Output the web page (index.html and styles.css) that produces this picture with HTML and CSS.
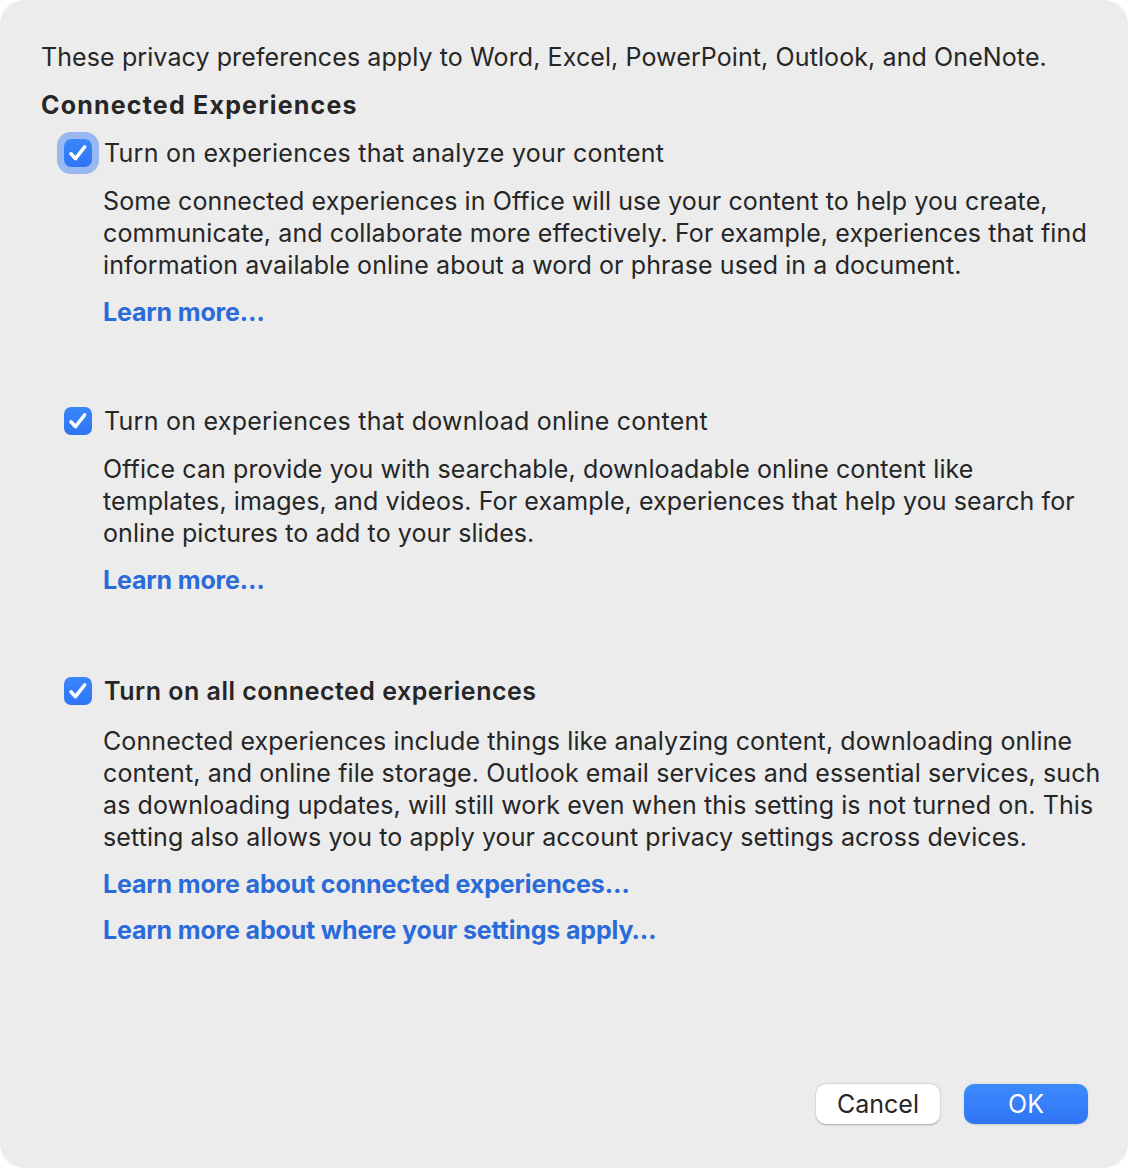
FILE: index.html
```html
<!DOCTYPE html>
<html lang="en">
  <head>
    <meta charset="utf-8" />
    <title>Privacy preferences</title>
    <link rel="stylesheet" href="styles.css">
  </head>
  <body>
    <div class="window">
      <p class="intro">These privacy preferences apply to Word, Excel, PowerPoint, Outlook, and OneNote.</p>
      <h2 class="heading">Connected Experiences</h2>

      <section class="option first">
        <label class="check-row">
          <span class="box focused">
            <svg viewBox="0 0 28 28" width="28" height="28"><path d="M7 14.8l4.4 4.8 9.2-11.6" fill="none" stroke="#fff" stroke-width="3.6" stroke-linecap="round" stroke-linejoin="round"/></svg>
          </span>
          <span class="label">Turn on experiences that analyze your content</span>
        </label>
        <p class="desc">Some connected experiences in Office will use your content to help you create, communicate, and collaborate more effectively. For example, experiences that find information available online about a word or phrase used in a document.</p>
        <a class="link" href="#">Learn more…</a>
      </section>

      <section class="option">
        <label class="check-row">
          <span class="box">
            <svg viewBox="0 0 28 28" width="28" height="28"><path d="M7 14.8l4.4 4.8 9.2-11.6" fill="none" stroke="#fff" stroke-width="3.6" stroke-linecap="round" stroke-linejoin="round"/></svg>
          </span>
          <span class="label">Turn on experiences that download online content</span>
        </label>
        <p class="desc">Office can provide you with searchable, downloadable online content like<br>templates, images, and videos. For example, experiences that help you search for online pictures to add to your slides.</p>
        <a class="link" href="#">Learn more…</a>
      </section>

      <section class="option last">
        <label class="check-row">
          <span class="box">
            <svg viewBox="0 0 28 28" width="28" height="28"><path d="M7 14.8l4.4 4.8 9.2-11.6" fill="none" stroke="#fff" stroke-width="3.6" stroke-linecap="round" stroke-linejoin="round"/></svg>
          </span>
          <span class="label strong">Turn on all connected experiences</span>
        </label>
        <p class="desc">Connected experiences include things like analyzing content, downloading online content, and online file storage. Outlook email services and essential services, such as downloading updates, will still work even when this setting is not turned on. This setting also allows you to apply your account privacy settings across devices.</p>
        <a class="link" href="#">Learn more about connected experiences…</a>
        <a class="link" href="#">Learn more about where your settings apply…</a>
      </section>

      <footer class="buttons">
        <button class="btn cancel">Cancel</button>
        <button class="btn ok">OK</button>
      </footer>
    </div>
  </body>
</html>
```

FILE: styles.css
```css
html,
body {
  margin: 0;
  background: #ffffff;
  font-family: Inter, "Noto Sans", sans-serif;
  color: #262626;
}

.window {
  box-sizing: border-box;
  height: 1168px;
  background: #ececec;
  border-radius: 24px;
  padding: 41px 20px 44px 41px;
  display: flex;
  flex-direction: column;
  font-size: 25px;
  line-height: 32px;
  letter-spacing: 0.1px;
}

.intro {
  margin: 0;
}

.heading {
  margin: 16px 0 0 0;
  font-size: 25px;
  font-weight: 700;
  line-height: 32px;
  letter-spacing: 1.2px;
}

.option {
  display: flex;
  flex-direction: column;
  align-items: flex-start;
  padding-left: 23px;
  margin-top: 77px;
}

.option.first {
  margin-top: 16px;
}

.option.last {
  margin-top: 79px;
}

.check-row {
  display: flex;
  align-items: center;
  gap: 12px;
}

.box {
  width: 28px;
  height: 28px;
  border-radius: 7px;
  background: linear-gradient(#3a86fb, #2f74f4);
  display: flex;
}

.box.focused {
  box-shadow: 0 0 0 7px rgba(70, 130, 245, 0.5);
}

.label {
  letter-spacing: 0.25px;
}

.label.strong {
  font-weight: 600;
  letter-spacing: 0.5px;
}

.desc {
  margin: 16px 0 0 39px;
  width: 1000px;
}

.last .desc {
  margin-top: 18px;
}

.link {
  margin-top: 15px;
  margin-left: 39px;
  color: #2b6ad9;
  font-weight: 700;
  letter-spacing: -0.15px;
  text-decoration: none;
}

.link + .link {
  margin-top: 14px;
}

.buttons {
  margin-top: auto;
  margin-right: 20px;
  display: flex;
  justify-content: flex-end;
  gap: 24px;
}

.btn {
  width: 124px;
  height: 40px;
  border: none;
  border-radius: 10px;
  font-family: Inter, "Noto Sans", sans-serif;
  font-size: 25px;
  padding: 0;
}

.cancel {
  background: #ffffff;
  color: #262626;
  box-shadow: 0 0.5px 2px rgba(0, 0, 0, 0.3);
}

.ok {
  background: linear-gradient(#3d8bfd, #2f74f5);
  color: #ffffff;
  box-shadow: 0 0.5px 2px rgba(0, 0, 0, 0.15);
}
```
